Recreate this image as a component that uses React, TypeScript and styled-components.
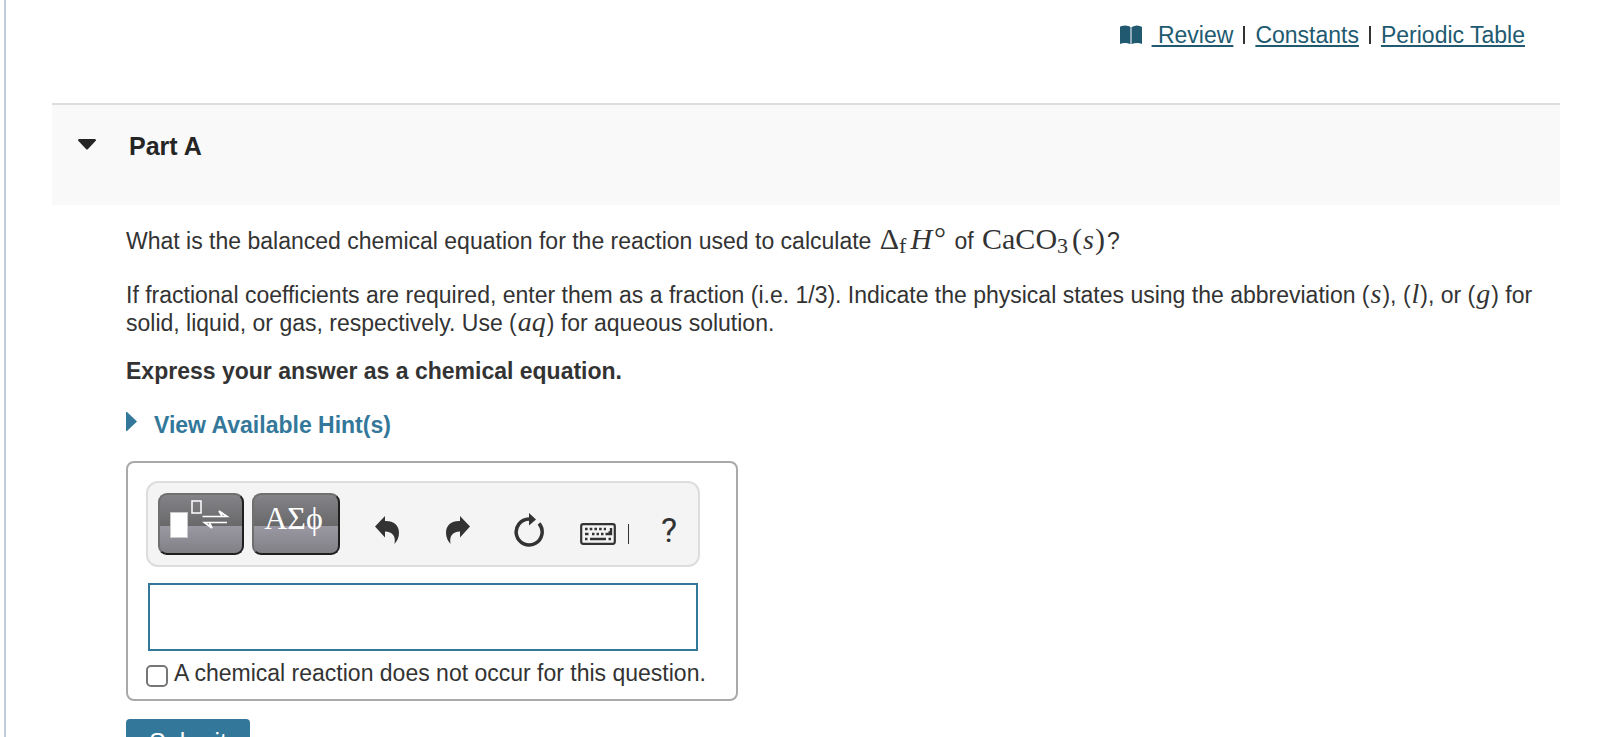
import React from "react";
import styled, { createGlobalStyle } from "styled-components";

const GlobalStyle = createGlobalStyle`
  *, *::before, *::after { box-sizing: border-box; }
  html { scrollbar-width: none; }
  body {
    margin: 0;
    background: #fff;
    color: #333;
    font-family: "Liberation Sans", Arial, Helvetica, sans-serif;
    font-size: 23px;
    line-height: 28px;
  }
  button, input { font: inherit; color: inherit; }
`;

const Page = styled.div`
  min-height: 100vh;
  margin-left: 4px;
  padding: 21px 54px 24px 46px;
  border-left: 2px solid #c0cbe0;
`;

const Resources = styled.nav`
  display: flex;
  justify-content: flex-end;
  align-items: center;
  gap: 10px;
  padding-right: 35px;
  margin-bottom: 54px;
`;

const ResourceLink = styled.a`
  color: #215a70;
  text-decoration: underline;
  text-decoration-thickness: 2px;
  text-underline-offset: 2px;
  text-decoration-skip-ink: none;
  white-space: pre;
`;

const Divider = styled.span`
  width: 2px;
  height: 18px;
  background: #333;
`;

const PartHeader = styled.header`
  display: flex;
  align-items: flex-start;
  height: 102px;
  padding: 27px 26px;
  border-top: 2px solid #ddd;
  background: #f9f9f9;
  color: #252525;
`;

const Toggle = styled.button`
  display: flex;
  align-items: center;
  gap: 33px;
  padding: 0;
  border: 0;
  background: none;
  font-size: 25px;
  font-weight: bold;

  svg { margin-bottom: 2px; }
`;

const PartTitle = styled.h2`
  margin: 0;
  font: inherit;
`;

const Content = styled.main`
  padding: 22px 0 0 74px;
`;

const Paragraph = styled.p<{ $strong?: boolean }>`
  margin: 0 0 20px;
  font-weight: ${(p) => (p.$strong ? "bold" : "normal")};
`;

const Question = styled(Paragraph)`
  margin-bottom: 26px;
`;

const Formula = styled.span`
  margin: 0 2px;
  font-family: "Liberation Serif", "Times New Roman", serif;
  font-size: 30px;
  line-height: 20px;
  white-space: nowrap;

  sub {
    padding-right: 4px;
    font-size: 22px;
    line-height: 1px;
    vertical-align: -4px;
  }
  sup {
    padding-left: 2px;
    font-size: 30px;
    line-height: 1px;
    vertical-align: 1px;
  }
`;

const State = styled.i`
  padding: 0 1px;
  font-family: "Liberation Serif", "Times New Roman", serif;
  font-size: 28px;
  line-height: 20px;
`;

const HintButton = styled.button`
  display: flex;
  align-items: center;
  gap: 17px;
  margin: 26px 0 22px;
  padding: 0;
  border: 0;
  background: none;
  color: #33789a;
  font-weight: bold;

  svg { margin-bottom: 6px; }
`;

const AnswerBox = styled.form`
  width: 612px;
  max-width: 100%;
  padding: 18px 18px 12px;
  border: 2px solid #a9a9a9;
  border-radius: 8px;
`;

const Toolbar = styled.div`
  display: flex;
  align-items: flex-start;
  width: 554px;
  max-width: 100%;
  height: 86px;
  padding: 10px;
  border: 2px solid #ddd;
  border-radius: 12px;
  background: #f4f4f4;
`;

const PaletteButton = styled.button<{ $width: number }>`
  display: flex;
  justify-content: center;
  width: ${(p) => p.$width}px;
  height: 62px;
  margin-right: 8px;
  padding: 0;
  border: 2px solid;
  border-color: #6f6f6f #1f1f1f #1f1f1f #6f6f6f;
  border-radius: 9px;
  background: linear-gradient(#838388 0%, #69696a 53%, #9a98a3 53%, #818085 100%);
  color: #fff;
  font-family: "Liberation Serif", "Times New Roman", serif;
  font-size: 32px;
  line-height: 46px;
`;

const GreekPaletteButton = styled(PaletteButton)`
  padding-right: 5px;
`;

const Tools = styled.div`
  display: flex;
  align-items: center;
  height: 62px;
  padding: 11px 0 0 3px;
`;

const Tool = styled.button<{ $width: number }>`
  display: flex;
  align-items: center;
  justify-content: center;
  width: ${(p) => p.$width}px;
  padding: 0;
  border: 0;
  background: none;
  color: #333;
`;

const KeyboardGroup = styled.div`
  display: flex;
  align-items: center;
  gap: 12px;
  padding: 9px 26px 0 16px;
`;

const Separator = styled.span`
  width: 1px;
  height: 20px;
  background: #333;
`;

const Help = styled(Tool)`
  font-family: Roboto, sans-serif;
  font-size: 34px;
`;

const AnswerInput = styled.input`
  display: block;
  width: 550px;
  max-width: 100%;
  height: 68px;
  margin: 16px 2px 8px;
  padding: 0 12px;
  border: 2px solid #33789a;
  border-radius: 0;
  background: #fff;
  outline: none;
`;

const CheckRow = styled.label`
  display: flex;
  align-items: flex-start;
  gap: 6px;
`;

const Checkbox = styled.input`
  appearance: none;
  flex: none;
  width: 22px;
  height: 22px;
  margin: 6px 0 0;
  border: 2px solid #767676;
  border-radius: 5px;
  background: #fff;

  &:checked { background: #33789a; }
`;

const SubmitButton = styled.button`
  margin-top: 18px;
  width: 124px;
  height: 46px;
  padding: 0;
  border: 0;
  border-radius: 4px;
  background: #33789a;
  color: #fff;
  font-size: 25px;
`;

const BookIcon = () => (
  <svg width="22" height="20" viewBox="0 0 22 20" aria-hidden="true">
    <path d="M0 2Q1 0.500 5 0.500T10 2V19Q8 18 5 18T0 19Z" fill="#215a70" />
    <path d="M12 2Q14 0.500 17 0.500T22 2V19Q20 18 17 18T12 19Z" fill="#215a70" />
    <path d="M11 2V19" stroke="#8facb8" strokeWidth="2" />
  </svg>
);

const TemplateIcon = () => (
  <svg width="82" height="58" viewBox="0 0 82 58" aria-hidden="true">
    <rect x="10.500" y="17.500" width="17" height="25" fill="#fff" stroke="#c9c9c9" />
    <rect x="32" y="6" width="9" height="12" fill="none" stroke="#fff" strokeWidth="1.500" />
    <path d="M42.500 21.500H67L59 16L62 21M67 27.500H44.500L52 33L49.500 28" fill="none" stroke="#fff" strokeWidth="1.700" />
  </svg>
);

const CurvedArrow = ({ flip = false }: { flip?: boolean }) => (
  <svg width="26" height="30" viewBox="0 0 26 30" aria-hidden="true">
    <path
      d="M1 11.500L11 1V6C19 5.500 25 10 25 17.500Q25 24 20.500 29Q22.500 17 11 16.500V22.500Z"
      fill="currentColor"
      transform={flip ? "matrix(-1 0 0 1 26 0)" : undefined}
    />
  </svg>
);

const ResetIcon = () => (
  <svg width="30" height="34" viewBox="0 0 30 34" aria-hidden="true">
    <path d="M15 6A13 13 0 1 0 25 10.500" fill="none" stroke="currentColor" strokeWidth="3.500" />
    <path d="M15 0L22 6.500L15 12.500Z" fill="currentColor" />
  </svg>
);

const KeyboardIcon = () => (
  <svg width="36" height="22" viewBox="0 0 36 22" aria-hidden="true">
    <rect x="1.200" y="1.200" width="33.600" height="19.600" rx="2" fill="none" stroke="currentColor" strokeWidth="2.200" />
    <path d="M5 6H26" stroke="currentColor" strokeWidth="2.400" strokeDasharray="2.600 2.100" />
    <path d="M5 11H8.500M12 11H14.500M16.500 11H19M21 11H23.500M25.500 11H31V5M28.500 9.500H31M5 16H7.500M10 16H26M28.500 16H31" fill="none" stroke="currentColor" strokeWidth="2.400" />
  </svg>
);

export default function App() {
  return (
    <>
      <GlobalStyle />
      <Page>
        <Resources aria-label="Resources">
          <BookIcon />
          <ResourceLink href="#review">{"\u00a0Review"}</ResourceLink>
          <Divider />
          <ResourceLink href="#constants">Constants</ResourceLink>
          <Divider />
          <ResourceLink href="#periodic-table">Periodic Table</ResourceLink>
        </Resources>

        <PartHeader>
          <Toggle type="button" aria-expanded="true">
            <svg width="18" height="12" viewBox="0 0 18 12" aria-hidden="true">
              <path d="M1 0H17Q18 0 18 1.500L10 10Q9 11 8 10L0 1.500Q0 0 1 0Z" fill="currentColor" />
            </svg>
            <PartTitle>Part A</PartTitle>
          </Toggle>
        </PartHeader>

        <Content>
          <Question>
            What is the balanced chemical equation for the reaction used to calculate{" "}
            <Formula>
              Δ<sub>f</sub>
              <i>H</i>
              <sup>°</sup>
            </Formula>{" "}
            of{" "}
            <Formula>
              CaCO<sub>3</sub>(<State>s</State>)
            </Formula>
            ?
          </Question>
          <Paragraph>
            If fractional coefficients are required, enter them as a fraction (i.e. 1/3). Indicate the
            physical states using the abbreviation (<State>s</State>), (<State>l</State>), or (
            <State>g</State>) for solid, liquid, or gas, respectively. Use (<State>aq</State>) for
            aqueous solution.
          </Paragraph>
          <Paragraph $strong>Express your answer as a chemical equation.</Paragraph>

          <HintButton type="button" aria-expanded="false">
            <svg width="11" height="20" viewBox="0 0 11 20" aria-hidden="true">
              <path d="M0 0H1L11 9.500L1 19H0Z" fill="currentColor" />
            </svg>
            View Available Hint(s)
          </HintButton>

          <AnswerBox id="answer-form">
            <Toolbar role="toolbar" aria-label="Equation tools">
              <PaletteButton type="button" $width={86} aria-label="Templates">
                <TemplateIcon />
              </PaletteButton>
              <GreekPaletteButton type="button" $width={88} aria-label="Greek letters">
                ΑΣϕ
              </GreekPaletteButton>
              <Tools>
                <Tool type="button" $width={71} aria-label="Undo">
                  <CurvedArrow />
                </Tool>
                <Tool type="button" $width={71} aria-label="Redo">
                  <CurvedArrow flip />
                </Tool>
                <Tool type="button" $width={71} aria-label="Reset">
                  <ResetIcon />
                </Tool>
                <KeyboardGroup>
                  <Tool type="button" $width={36} aria-label="Keyboard shortcuts">
                    <KeyboardIcon />
                  </Tool>
                  <Separator />
                </KeyboardGroup>
                <Help type="button" $width={28} aria-label="Help">
                  ?
                </Help>
              </Tools>
            </Toolbar>
            <AnswerInput type="text" aria-label="Chemical equation" />
            <CheckRow>
              <Checkbox type="checkbox" />
              A chemical reaction does not occur for this question.
            </CheckRow>
          </AnswerBox>
          <SubmitButton type="submit" form="answer-form">
            Submit
          </SubmitButton>
        </Content>
      </Page>
    </>
  );
}
